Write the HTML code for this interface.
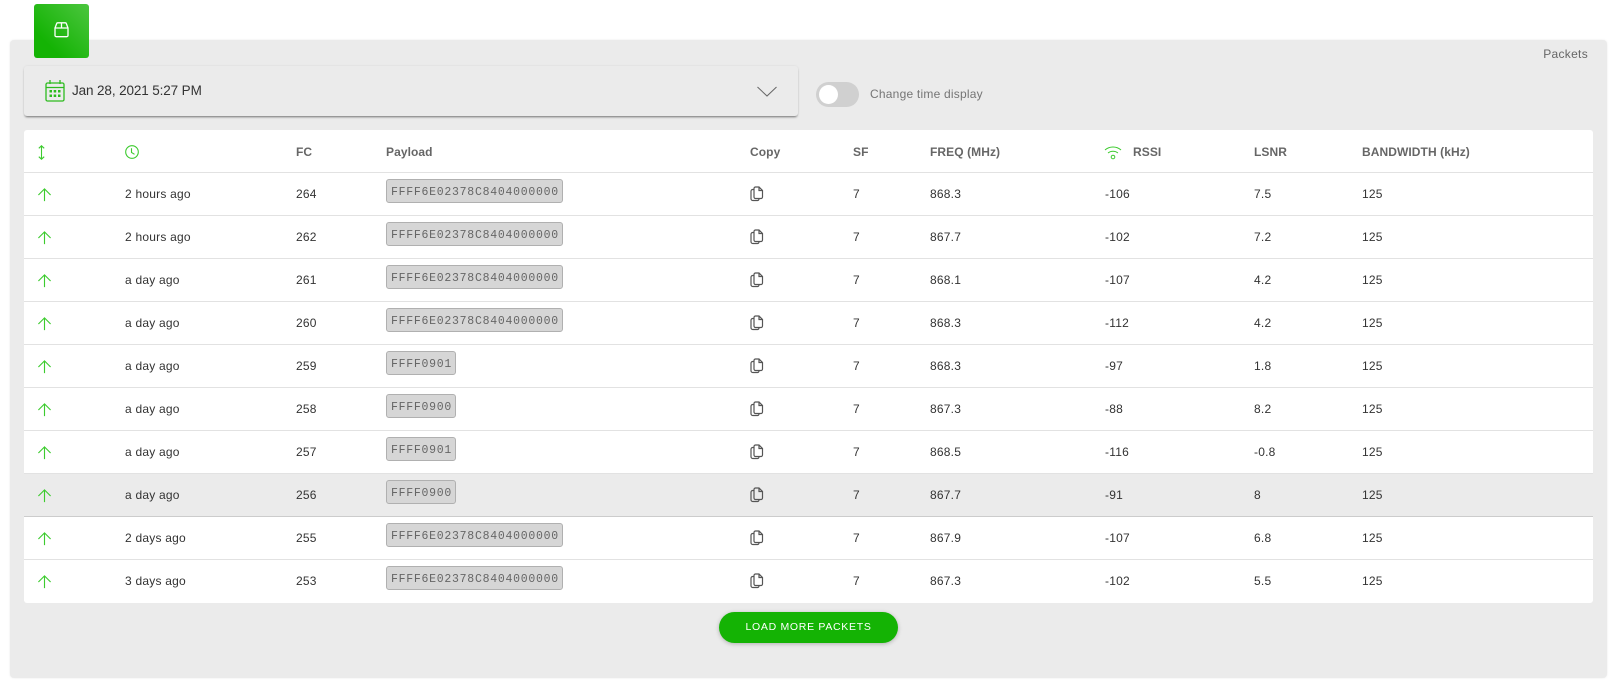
<!DOCTYPE html>
<html><head><meta charset="utf-8">
<style>
html,body{margin:0;padding:0;background:#fff;width:1616px;height:682px;overflow:hidden}
body{font-family:"Liberation Sans",sans-serif;position:relative;color:#333}
.panel{position:absolute;left:10px;top:40px;width:1597px;height:638px;background:#ebebeb;border-radius:4px;box-shadow:0 0 2px rgba(0,0,0,.08)}
.tab{position:absolute;left:34px;top:4px;width:55px;height:54px;border-radius:3px;background:linear-gradient(45deg,#14b304 25%,#4cc63f 100%)}
.tab svg{position:absolute;left:19px;top:18px}
.title{position:absolute;right:28px;top:47px;font-size:12px;color:#666;line-height:14px;letter-spacing:.3px}
.date{position:absolute;left:24px;top:66px;width:774px;height:50px;background:#ebebeb;border-radius:3px;box-shadow:0 2px 2px -1px rgba(0,0,0,.5),0 0 2px rgba(0,0,0,.08)}
.date span{position:absolute;left:48px;top:16px;font-size:13.500px;line-height:18px;color:#333;letter-spacing:-.12px}
.date svg.cal{position:absolute;left:21px;top:14px}
.date svg.chev{position:absolute;left:733px;top:20px}
.sw{position:absolute;left:816px;top:82px;width:43px;height:25px;border-radius:13px;background:#d0d0d0}
.sw i{position:absolute;left:3px;top:3px;width:19px;height:19px;border-radius:50%;background:#fff}
.swl{position:absolute;left:870px;top:86px;font-size:12px;line-height:16px;color:#757575;letter-spacing:.22px}
.tbl{position:absolute;left:24px;top:130px;width:1569px;height:473px;background:#fff;border-radius:3px;overflow:hidden}
.r{position:relative;height:42px;border-bottom:1px solid #e2e2e2;font-size:12px;color:#333;letter-spacing:.22px}
.r.h{font-weight:bold;color:#666;letter-spacing:.08px;height:42px}
.r.s{background:#ebebeb;border-bottom-color:#ccc}
.r.l{border-bottom:0}
.r>span{position:absolute;top:13px;line-height:16px;white-space:nowrap}
.r.h>span{top:14px}
.r>svg{position:absolute}
svg.a{left:13px;top:14px;width:15px;height:15px}
.t{left:101px}.f{left:272px}svg.cp{left:725px;top:13px}
.sf{left:829px}.fq{left:906px}.rs{left:1081px}.rh{left:1109px}.ls{left:1230px}.bw{left:1338px}
.hc{left:726px}
.r>b{position:absolute;left:362px;top:6px;height:22px;padding:0 3px 0 4px;background:#d6d6d6;border:1px solid #b0b0b0;border-radius:3px;font:normal 11.500px/25px "Liberation Mono",monospace;letter-spacing:.73px;color:#666}
.btn{position:absolute;left:719px;top:612px;width:179px;height:31px;border-radius:16px;background:#14b304;box-shadow:0 1px 4px rgba(0,0,0,.25);color:#fff;font-size:10.500px;line-height:31px;text-align:center;letter-spacing:.7px}
</style></head><body>
<svg width="0" height="0" style="position:absolute"><defs>
<symbol id="up" viewBox="0 0 16 16"><path d="M8 15V2M1.500 8.500L8 2l6.500 6.500" fill="none" stroke="#3ccb2e" stroke-width="1.200"/></symbol>
<symbol id="co" viewBox="0 0 16 16"><path d="M5 3.500H3.700A1.700 1.700 0 0 0 2 5.200v7.600A1.700 1.700 0 0 0 3.700 14.500H8.500A1.500 1.500 0 0 0 10 13v-.5M5 2.500A1.500 1.500 0 0 1 6.500 1H10l3.500 3.500v6.500A1.500 1.500 0 0 1 12 12.500H6.500A1.500 1.500 0 0 1 5 11zM10 1v3.500h3.500" fill="none" stroke="#555" stroke-width="1.200"/></symbol>
</defs></svg>
<div class="panel"></div>
<div class="tab"><svg width="17" height="16" viewBox="0 0 17 16" fill="none" stroke="#fff" stroke-width="1.300"><path d="M2 6L3.700 1.500a1 1 0 0 1 1-.7h7.600a1 1 0 0 1 1 .7L15 6v7.500a1.200 1.200 0 0 1-1.200 1.200H3.200A1.200 1.200 0 0 1 2 13.500zM2 6h13M8.500 1v5"/></svg></div>
<div class="title">Packets</div>
<div class="date">
<svg class="cal" width="20" height="22" viewBox="0 0 20 22" fill="none" stroke="#2cbb1e" stroke-width="1.300"><rect x="1" y="3" width="18" height="18" rx="1.500"/><path d="M1 7.500h18M5 0v4M15 0v4"/><g fill="#2cbb1e" stroke="none"><rect x="4.500" y="10" width="2.500" height="2.500"/><rect x="8.700" y="10" width="2.500" height="2.500"/><rect x="13" y="10" width="2.500" height="2.500"/><rect x="4.500" y="14.500" width="2.500" height="2.500"/><rect x="8.700" y="14.500" width="2.500" height="2.500"/><rect x="13" y="14.500" width="2.500" height="2.500"/></g></svg>
<span>Jan 28, 2021 5:27 PM</span>
<svg class="chev" width="20" height="11" viewBox="0 0 20 11" fill="none" stroke="#666" stroke-width="1"><path d="M.5 1L10 10l9.500-9"/></svg>
</div>
<div class="sw"><i></i></div>
<div class="swl">Change time display</div>
<div class="tbl">
<div class="r h">
<svg style="left:14px;top:15px" width="7" height="15" viewBox="0 0 7 15" fill="none" stroke="#3ccb2e" stroke-width="1.100"><path d="M3.500 1v13M.8 3.300L3.500.8l2.700 2.500M.8 11.700l2.700 2.500 2.700-2.500"/></svg>
<svg style="left:101px;top:15px" width="14" height="14" viewBox="0 0 14 14" fill="none" stroke="#3ccb2e" stroke-width="1.100"><circle cx="7" cy="7" r="6.300"/><path d="M6.500 3.200V7.500l3 1.800"/></svg>
<span class="f">FC</span><span style="left:362px">Payload</span><span class="hc">Copy</span><span class="sf">SF</span><span class="fq">FREQ (MHz)</span>
<svg style="left:1080px;top:15px" width="18" height="15" viewBox="0 0 18 15" fill="none" stroke="#3ccb2e" stroke-width="1"><path d="M1 5C5.500 1 12.500 1 17 5M4 8C6.800 5.600 11.200 5.600 14 8"/><circle cx="9" cy="12" r="1.800"/></svg>
<span class="rh">RSSI</span><span class="ls">LSNR</span><span class="bw">BANDWIDTH (kHz)</span>
</div>
<div class="r"><svg class="a" width="16" height="16"><use href="#up"/></svg><span class="t">2 hours ago</span><span class="f">264</span><b>FFFF6E02378C8404000000</b><svg class="cp" width="16" height="16"><use href="#co"/></svg><span class="sf">7</span><span class="fq">868.3</span><span class="rs">-106</span><span class="ls">7.5</span><span class="bw">125</span></div>
<div class="r"><svg class="a" width="16" height="16"><use href="#up"/></svg><span class="t">2 hours ago</span><span class="f">262</span><b>FFFF6E02378C8404000000</b><svg class="cp" width="16" height="16"><use href="#co"/></svg><span class="sf">7</span><span class="fq">867.7</span><span class="rs">-102</span><span class="ls">7.2</span><span class="bw">125</span></div>
<div class="r"><svg class="a" width="16" height="16"><use href="#up"/></svg><span class="t">a day ago</span><span class="f">261</span><b>FFFF6E02378C8404000000</b><svg class="cp" width="16" height="16"><use href="#co"/></svg><span class="sf">7</span><span class="fq">868.1</span><span class="rs">-107</span><span class="ls">4.2</span><span class="bw">125</span></div>
<div class="r"><svg class="a" width="16" height="16"><use href="#up"/></svg><span class="t">a day ago</span><span class="f">260</span><b>FFFF6E02378C8404000000</b><svg class="cp" width="16" height="16"><use href="#co"/></svg><span class="sf">7</span><span class="fq">868.3</span><span class="rs">-112</span><span class="ls">4.2</span><span class="bw">125</span></div>
<div class="r"><svg class="a" width="16" height="16"><use href="#up"/></svg><span class="t">a day ago</span><span class="f">259</span><b>FFFF0901</b><svg class="cp" width="16" height="16"><use href="#co"/></svg><span class="sf">7</span><span class="fq">868.3</span><span class="rs">-97</span><span class="ls">1.8</span><span class="bw">125</span></div>
<div class="r"><svg class="a" width="16" height="16"><use href="#up"/></svg><span class="t">a day ago</span><span class="f">258</span><b>FFFF0900</b><svg class="cp" width="16" height="16"><use href="#co"/></svg><span class="sf">7</span><span class="fq">867.3</span><span class="rs">-88</span><span class="ls">8.2</span><span class="bw">125</span></div>
<div class="r"><svg class="a" width="16" height="16"><use href="#up"/></svg><span class="t">a day ago</span><span class="f">257</span><b>FFFF0901</b><svg class="cp" width="16" height="16"><use href="#co"/></svg><span class="sf">7</span><span class="fq">868.5</span><span class="rs">-116</span><span class="ls">-0.8</span><span class="bw">125</span></div>
<div class="r s"><svg class="a" width="16" height="16"><use href="#up"/></svg><span class="t">a day ago</span><span class="f">256</span><b>FFFF0900</b><svg class="cp" width="16" height="16"><use href="#co"/></svg><span class="sf">7</span><span class="fq">867.7</span><span class="rs">-91</span><span class="ls">8</span><span class="bw">125</span></div>
<div class="r"><svg class="a" width="16" height="16"><use href="#up"/></svg><span class="t">2 days ago</span><span class="f">255</span><b>FFFF6E02378C8404000000</b><svg class="cp" width="16" height="16"><use href="#co"/></svg><span class="sf">7</span><span class="fq">867.9</span><span class="rs">-107</span><span class="ls">6.8</span><span class="bw">125</span></div>
<div class="r l"><svg class="a" width="16" height="16"><use href="#up"/></svg><span class="t">3 days ago</span><span class="f">253</span><b>FFFF6E02378C8404000000</b><svg class="cp" width="16" height="16"><use href="#co"/></svg><span class="sf">7</span><span class="fq">867.3</span><span class="rs">-102</span><span class="ls">5.5</span><span class="bw">125</span></div>
</div>
<div class="btn">LOAD MORE PACKETS</div>
</body></html>
